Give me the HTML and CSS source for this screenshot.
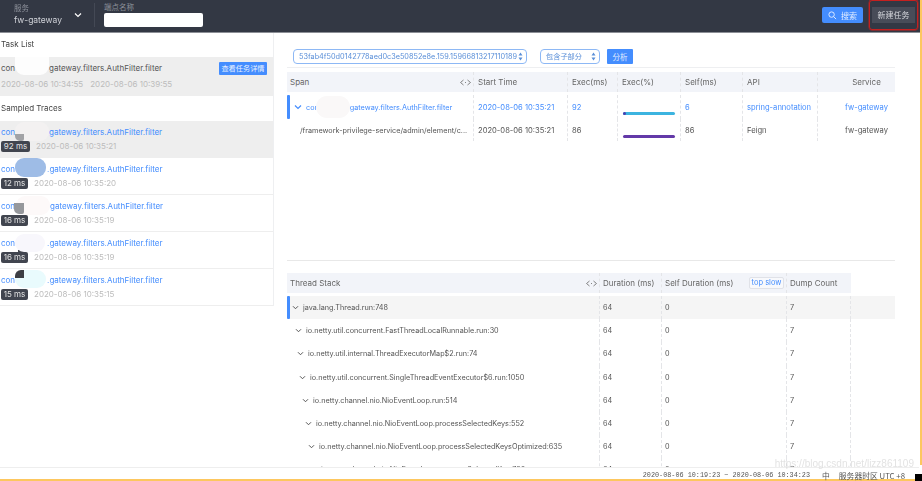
FILE: index.html
```html
<!DOCTYPE html>
<html lang="zh">
<head>
<meta charset="utf-8">
<title>Profile</title>
<link rel="stylesheet" href="styles.css">
</head>
<body>
<svg class="defs" width="0" height="0">
  <symbol id="chev" viewBox="0 0 8 6"><path d="M1 1.5l3 3 3-3" fill="none" stroke="currentColor" stroke-width="1.2"/></symbol>
  <symbol id="ud" viewBox="0 0 5 9"><path d="M2.5 0.5L4.5 3.5H0.5zM2.5 8.5L0.5 5.5H4.5z" fill="#5a8fd8"/></symbol>
  <symbol id="lr" viewBox="0 0 11 7"><path d="M3.5 1L0.5 3.5L3.5 6M7.5 1L10.5 3.5L7.5 6" fill="none" stroke="#777" stroke-width="0.9"/><path d="M5 3.5h1" stroke="#777" stroke-width="0.9"/></symbol>
</svg>
<div class="frame">
  <header class="topbar">
    <div class="field service">
      <span class="label">服务</span>
      <span class="value">fw-gateway</span>
      <svg class="caret" width="8" height="6"><use href="#chev"/></svg>
    </div>
    <div class="field endpoint">
      <span class="label">端点名称</span>
      <span class="input"></span>
    </div>
    <div class="spacer"></div>
    <button class="search"><svg width="9" height="9" viewBox="0 0 10 10"><circle cx="4" cy="4" r="3" fill="none" stroke="#dbe8ff" stroke-width="1.1"/><path d="M6.2 6.2L9 9" stroke="#dbe8ff" stroke-width="1.1"/></svg>搜索</button>
    <div class="create-ring"><span class="create">新建任务</span></div>
  </header>

  <main class="content">
    <aside class="side">
      <h2 class="side-title">Task List</h2>
      <div class="task selected">
        <div class="task-top">
          <span class="task-name">con<i class="gap g1"></i>gateway.filters.AuthFilter.filter</span>
          <span class="detail">查看任务详情</span>
        </div>
        <div class="meta"><span>2020-08-06 10:34:55</span><span>2020-08-06 10:39:55</span></div>
        <i class="mask taskmask"></i>
      </div>
      <h2 class="side-title second">Sampled Traces</h2>
      <ul class="traces">
        <li class="trace selected">
          <a>con<i class="gap g1"></i>gateway.filters.AuthFilter.filter</a>
          <div class="trace-meta"><b>92 ms</b><span>2020-08-06 10:35:21</span></div>
          <i class="mask white"></i>
          <i class="mask grey"></i>
        </li>
        <li class="trace">
          <a>con<i class="gap g2"></i>.gateway.filters.AuthFilter.filter</a>
          <div class="trace-meta"><b>12 ms</b><span>2020-08-06 10:35:20</span></div>
          <i class="mask blue"></i>
        </li>
        <li class="trace">
          <a>con<i class="gap g3"></i>gateway.filters.AuthFilter.filter</a>
          <div class="trace-meta"><b>16 ms</b><span>2020-08-06 10:35:19</span></div>
          <i class="mask white"></i>
          <i class="mask grey"></i>
        </li>
        <li class="trace">
          <a>con<i class="gap g2"></i>.gateway.filters.AuthFilter.filter</a>
          <div class="trace-meta"><b>16 ms</b><span>2020-08-06 10:35:19</span></div>
          <i class="mask speck"></i>
          <i class="mask lilac"></i>
        </li>
        <li class="trace">
          <a>con<i class="gap g2"></i>.gateway.filters.AuthFilter.filter</a>
          <div class="trace-meta"><b>15 ms</b><span>2020-08-06 10:35:15</span></div>
          <i class="mask cyan"></i>
          <i class="mask dark"></i>
        </li>
      </ul>
    </aside>

    <section class="detail-pane">
      <div class="filters">
        <span class="select trace-id">53fab4f50d0142778aed0c3e50852e8e.159.15966813217110189<svg width="5" height="9"><use href="#ud"/></svg></span>
        <span class="select mode">包含子部分<svg width="5" height="9"><use href="#ud"/></svg></span>
        <button class="analyze">分析</button>
      </div>

      <div class="span-table">
        <div class="head span-cols">
          <div class="cell grow">Span<svg width="11" height="7"><use href="#lr"/></svg></div>
          <div class="cell">Start Time</div>
          <div class="cell">Exec(ms)</div>
          <div class="cell">Exec(%)</div>
          <div class="cell">Self(ms)</div>
          <div class="cell">API</div>
          <div class="cell center">Service</div>
        </div>
        <div class="row span-cols link first">
          <div class="cell name"><svg class="chev" width="8" height="6"><use href="#chev"/></svg>con<i class="gap g4"></i>gateway.filters.AuthFilter.filter</div>
          <div class="cell">2020-08-06 10:35:21</div>
          <div class="cell">92</div>
          <div class="cell"><span class="bar cyanbar"><i class="bar-start"></i></span></div>
          <div class="cell">6</div>
          <div class="cell">spring-annotation</div>
          <div class="cell center">fw-gateway</div>
        </div>
        <div class="row span-cols second-row">
          <div class="cell name path">/framework-privilege-service/admin/element/c...</div>
          <div class="cell">2020-08-06 10:35:21</div>
          <div class="cell">86</div>
          <div class="cell"><span class="bar purplebar"></span></div>
          <div class="cell">86</div>
          <div class="cell">Feign</div>
          <div class="cell center">fw-gateway</div>
        </div>
      </div>

      <hr class="divider">

      <div class="stack-table">
        <div class="head stack-cols stack-head">
          <div class="cell grow">Thread Stack<svg width="11" height="7"><use href="#lr"/></svg></div>
          <div class="cell">Duration (ms)</div>
          <div class="cell grow">Self Duration (ms)<span class="topslow">top slow</span></div>
          <div class="cell">Dump Count</div>
        </div>
        <div class="stack-rows">
          <div class="row stack-cols active"><div class="cell method d0"><svg class="chev" width="7" height="5"><use href="#chev"/></svg>java.lang.Thread.run:748</div><div class="cell">64</div><div class="cell">0</div><div class="cell">7</div><div class="cell"></div></div>
          <div class="row stack-cols"><div class="cell method d1"><svg class="chev" width="7" height="5"><use href="#chev"/></svg>io.netty.util.concurrent.FastThreadLocalRunnable.run:30</div><div class="cell">64</div><div class="cell">0</div><div class="cell">7</div><div class="cell"></div></div>
          <div class="row stack-cols"><div class="cell method d2"><svg class="chev" width="7" height="5"><use href="#chev"/></svg>io.netty.util.internal.ThreadExecutorMap$2.run:74</div><div class="cell">64</div><div class="cell">0</div><div class="cell">7</div><div class="cell"></div></div>
          <div class="row stack-cols"><div class="cell method d3"><svg class="chev" width="7" height="5"><use href="#chev"/></svg>io.netty.util.concurrent.SingleThreadEventExecutor$6.run:1050</div><div class="cell">64</div><div class="cell">0</div><div class="cell">7</div><div class="cell"></div></div>
          <div class="row stack-cols"><div class="cell method d4"><svg class="chev" width="7" height="5"><use href="#chev"/></svg>io.netty.channel.nio.NioEventLoop.run:514</div><div class="cell">64</div><div class="cell">0</div><div class="cell">7</div><div class="cell"></div></div>
          <div class="row stack-cols"><div class="cell method d5"><svg class="chev" width="7" height="5"><use href="#chev"/></svg>io.netty.channel.nio.NioEventLoop.processSelectedKeys:552</div><div class="cell">64</div><div class="cell">0</div><div class="cell">7</div><div class="cell"></div></div>
          <div class="row stack-cols"><div class="cell method d6"><svg class="chev" width="7" height="5"><use href="#chev"/></svg>io.netty.channel.nio.NioEventLoop.processSelectedKeysOptimized:635</div><div class="cell">64</div><div class="cell">0</div><div class="cell">7</div><div class="cell"></div></div>
          <div class="row stack-cols"><div class="cell method d7">io.netty.channel.nio.NioEventLoop.processSelectedKey:720</div><div class="cell">64</div><div class="cell">0</div><div class="cell">7</div><div class="cell"></div></div>
        </div>
      </div>
    </section>
  </main>

  <footer class="status">
    <span class="range">2020-08-06 10:19:23 ~ 2020-08-06 10:34:23</span>
    <span>中</span>
    <span>服务器时区 UTC +8</span>
  </footer>
</div>
<span class="watermark">https://blog.csdn.net/lizz861109</span>
<i class="notch"></i>
<i class="corner"></i>
</body>
</html>
```

FILE: styles.css
```css
* { box-sizing: border-box; }
html, body { margin: 0; height: 100%; overflow: hidden; background: #fff; }
body {
  position: relative;
  font-family: "Inter", "Noto Sans CJK SC", sans-serif;
  font-size: 8px;
  color: #4a4d55;
}
.defs { position: absolute; }
.frame {
  width: 922px;
  height: 481px;
  display: flex;
  flex-direction: column;
  border-right: 2px solid #fdc75e;
  border-bottom: 2px solid #fdc75e;
  filter: blur(0.5px);
}
.topbar {
  height: 33px;
  flex: none;
  padding-bottom: 2px;
  background: #333844;
  border-bottom: 1px solid #8c8f96;
  display: flex;
  align-items: center;
  color: #fff;
}
.field { display: flex; flex-direction: column; }
.service {
  position: relative;
  width: 95px;
  height: 24px;
  padding-left: 14px;
  border-right: 1px solid #444955;
  justify-content: center;
}
.label { font-size: 7.5px; line-height: 10px; color: #8d919b; }
.value { font-size: 8.5px; line-height: 12px; color: #d0d2d8; }
.caret { position: absolute; left: 74px; top: 9px; color: #fff; }
.endpoint { margin-left: 9px; }
.input { width: 99px; height: 14px; background: #fff; border-radius: 2px; }
.spacer { flex: 1; }
.search {
  width: 41px;
  height: 16px;
  margin-right: 6px;
  padding: 0;
  border: 0;
  border-radius: 2px;
  background: #448dfe;
  color: #e4eeff;
  font: 8px "Noto Sans CJK SC", sans-serif;
  display: flex;
  align-items: center;
  justify-content: center;
  gap: 4px;
}
.create-ring {
  width: 49px;
  height: 30px;
  margin-right: 2px;
  border: 1px solid #c5201f;
  border-radius: 3px;
  display: flex;
  align-items: center;
  justify-content: center;
  box-shadow: 0 0 0 0.4px #c5201f;
}
.create {
  width: 43px;
  height: 16px;
  text-align: center;
  background: #484c58;
  color: #d4d6dc;
  font: 8px/16px "Noto Sans CJK SC", sans-serif;
}
.content { flex: 1; min-height: 0; display: flex; }

/* Left column */
.side { width: 274px; flex: none; border-right: 1px solid #eeeff1; height: 273px; border-bottom: 1px solid #eeeff1; }
.side-title { margin: 0; height: 24px; padding: 6px 1px 0; font-size: 8px; line-height: 10px; font-weight: 400; color: #444; }
.side-title.second { height: 25px; padding-top: 7px; }
.task { position: relative; height: 39px; background: #eeeeee; padding: 4px 6px 0 1px; }
.task-top { display: flex; justify-content: space-between; align-items: center; height: 14px; }
.task-name { color: #555; }
.gap { display: inline-block; height: 1px; }
.g1 { width: 34px; }
.g2 { width: 32px; }
.g3 { width: 35px; }
.detail {
  width: 48px;
  height: 13px;
  background: #448dfe;
  color: #e9f1ff;
  border-radius: 1px;
  font: 7.2px/13px "Noto Sans CJK SC", sans-serif;
  text-align: center;
}
.meta { margin-top: 2px; line-height: 14px; color: #bcbcbc; display: flex; gap: 7px; }
.traces { margin: 0; padding: 0; list-style: none; }
.trace { position: relative; height: 37px; padding: 5px 0 0 1px; border-bottom: 1px solid #eeeeee; }
.trace.selected { background: #eeeeee; }
.trace a { display: block; line-height: 12px; color: #448dfe; white-space: nowrap; }
.trace-meta { display: flex; align-items: center; gap: 6px; margin-top: 3px; color: #bcbcbc; line-height: 11px; }
.trace-meta b { width: 27px; height: 11px; border-radius: 2px; background: #41454f; color: #e3e3e3; font-weight: 400; text-align: center; }
.selected .trace-meta b { width: 29px; }
.mask { position: absolute; display: block; }
.taskmask { left: 15px; top: 0; width: 34px; height: 18px; border-radius: 0 0 9px 9px; background: #fdfdfd; }
.mask.white { left: 15px; top: 1px; width: 34px; height: 19px; border-radius: 9px; background: #f3f1f1; }
.trace:nth-child(3) .mask.white { background: #fdf9f9; left: 16px; }
.mask.grey { left: 15px; top: 13px; width: 9px; height: 7px; border-radius: 0 0 2px 5px; background: #a2a3a6; }
.trace:nth-child(3) .mask.grey { left: 14px; top: 8px; width: 10px; height: 11px; background: #96989c; }
.mask.blue { left: 15px; top: 0; width: 31px; height: 19px; border-radius: 9px; background: #9ebce6; }
.mask.lilac { left: 15px; top: 2px; width: 30px; height: 18px; border-radius: 9px; background: #f8f7fc; }
.mask.speck { left: 18px; top: 15px; width: 7px; height: 5px; background: #44464c; }
.mask.cyan { left: 15px; top: 1px; width: 31px; height: 18px; border-radius: 9px; background: #e9fbfd; }
.mask.dark { left: 15px; top: 1px; width: 9px; height: 8px; border-radius: 6px 0 0 0; background: #3c3e44; }

/* Right column */
.detail-pane { flex: 1; min-width: 0; padding: 16px 25px 0 13px; display: flex; flex-direction: column; }
.filters {
  display: flex;
  flex: none;
  align-items: center;
  gap: 7px;
  padding: 0 0 4px 6px;
  height: 19px;
  border-bottom: 1px solid #eeeff1;
}
.select {
  height: 15px;
  border: 1px solid #8db8f5;
  border-radius: 4px;
  display: flex;
  align-items: center;
  justify-content: space-between;
  padding: 0 3px 0 5px;
  color: #5a8fd8;
  font-size: 7.3px;
}
.trace-id { width: 234px; }
.mode { width: 60px; margin-left: 6px; font-size: 7.2px; }
.analyze { width: 26px; height: 15px; padding: 0; border: 0; border-radius: 1px; background: #448dfe; color: #e4eeff; font: 7.5px "Noto Sans CJK SC", sans-serif; }
.span-table { margin-top: 4px; height: 188px; flex: none; }
.head { background: #f2f4f9; height: 20px; color: #666; align-items: center; }
.row { position: relative; color: #555; font-size: 7.25px; }
.span-cols { display: grid; grid-template-columns: 187px 94px 50px 63px 62px 75px 77px; }
.cell { display: flex; align-items: center; padding-left: 3px; min-width: 0; border-right: 1px dashed #e4e5e8; height: 100%; white-space: nowrap; }
.cell:last-child { border-right: 0; }
.span-cols .cell { padding-left: 4px; }
.span-cols .cell:first-child { padding-left: 3px; }
.span-cols .cell.center { padding-left: 20px; justify-content: center; }
.span-cols.row .cell:not(.name) { font-size: 7.6px; }
.cell.grow { justify-content: space-between; padding-right: 2px; }
.first { margin-top: 3px; height: 24px; color: #448dfe; }
.first::before, .active::before { content: ""; position: absolute; left: 0; top: 0; bottom: 0; width: 3px; background: #448dfe; border-radius: 1px; }
.second-row { height: 22px; }
.span-cols .cell.name { padding-left: 7px; }
.first .name { position: relative; }
.first .name .gap { height: 22px; margin: -6px 0 -6px -3px; width: 34px; border-radius: 11px; background: #faf8f8; }
.chev { margin-right: 4px; flex: none; color: #555; }
.first .chev { color: #448dfe; }
.span-cols .cell.path { padding-left: 13px; color: #555; }
.bar { display: block; position: relative; width: 52px; height: 3px; border-radius: 2px; margin: 12px 0 0 1px; }
.cyanbar { background: #3cb4e0; }
.purplebar { background: #6339a8; }
.bar-start { position: absolute; left: 0; top: 0; width: 3px; height: 3px; border-radius: 2px; background: #4a3fb0; }
.divider { width: 100%; margin: 0; border: 0; border-top: 1px solid #e8e8e8; flex: none; }
.stack-table { margin-top: 12px; flex: 1; min-height: 0; display: flex; flex-direction: column; }
.stack-cols { display: grid; grid-template-columns: 313px 62px 125px 64px 44px; }
.stack-head { grid-template-columns: 313px 62px 125px 64px; width: 564px; flex: none; }
.topslow { border: 1px solid #e0e2e8; border-radius: 2px; width: 35px; text-align: center; height: 12px; line-height: 10px; color: #448dfe; background: #f8f9fc; font-size: 7.5px; }
.stack-rows { margin-top: 3px; flex: 1; min-height: 0; overflow: hidden; }
.stack-rows .row { height: 23.2px; }
.active { background: #f5f5f5; }
.d0 { padding-left: 5px; }
.d1 { padding-left: 8px; }
.d2 { padding-left: 10px; }
.d3 { padding-left: 12px; }
.d4 { padding-left: 15px; }
.d5 { padding-left: 18px; }
.d6 { padding-left: 21px; }
.d7 { padding-left: 34px; }
.status {
  flex: none;
  height: 12px;
  display: flex;
  justify-content: flex-end;
  gap: 9px;
  padding-right: 15px;
  background: #fff;
  border-top: 1px solid #eee;
  line-height: 15px;
  color: #555;
  font-size: 7.8px;
  font-family: "Noto Sans CJK SC", sans-serif;
}
.range { font-family: "Liberation Mono", monospace; font-size: 6.8px; margin-right: 3px; }
.watermark { position: absolute; right: 8px; top: 458px; font-size: 10px; line-height: 12px; color: rgba(190,190,190,.45); font-family: "Liberation Sans", sans-serif; }
.notch { position: absolute; right: 0; top: 465px; width: 3px; height: 10px; background: #fff; }
.corner { position: absolute; right: 0; bottom: 0; width: 7px; height: 7px; background: #000; }
```
